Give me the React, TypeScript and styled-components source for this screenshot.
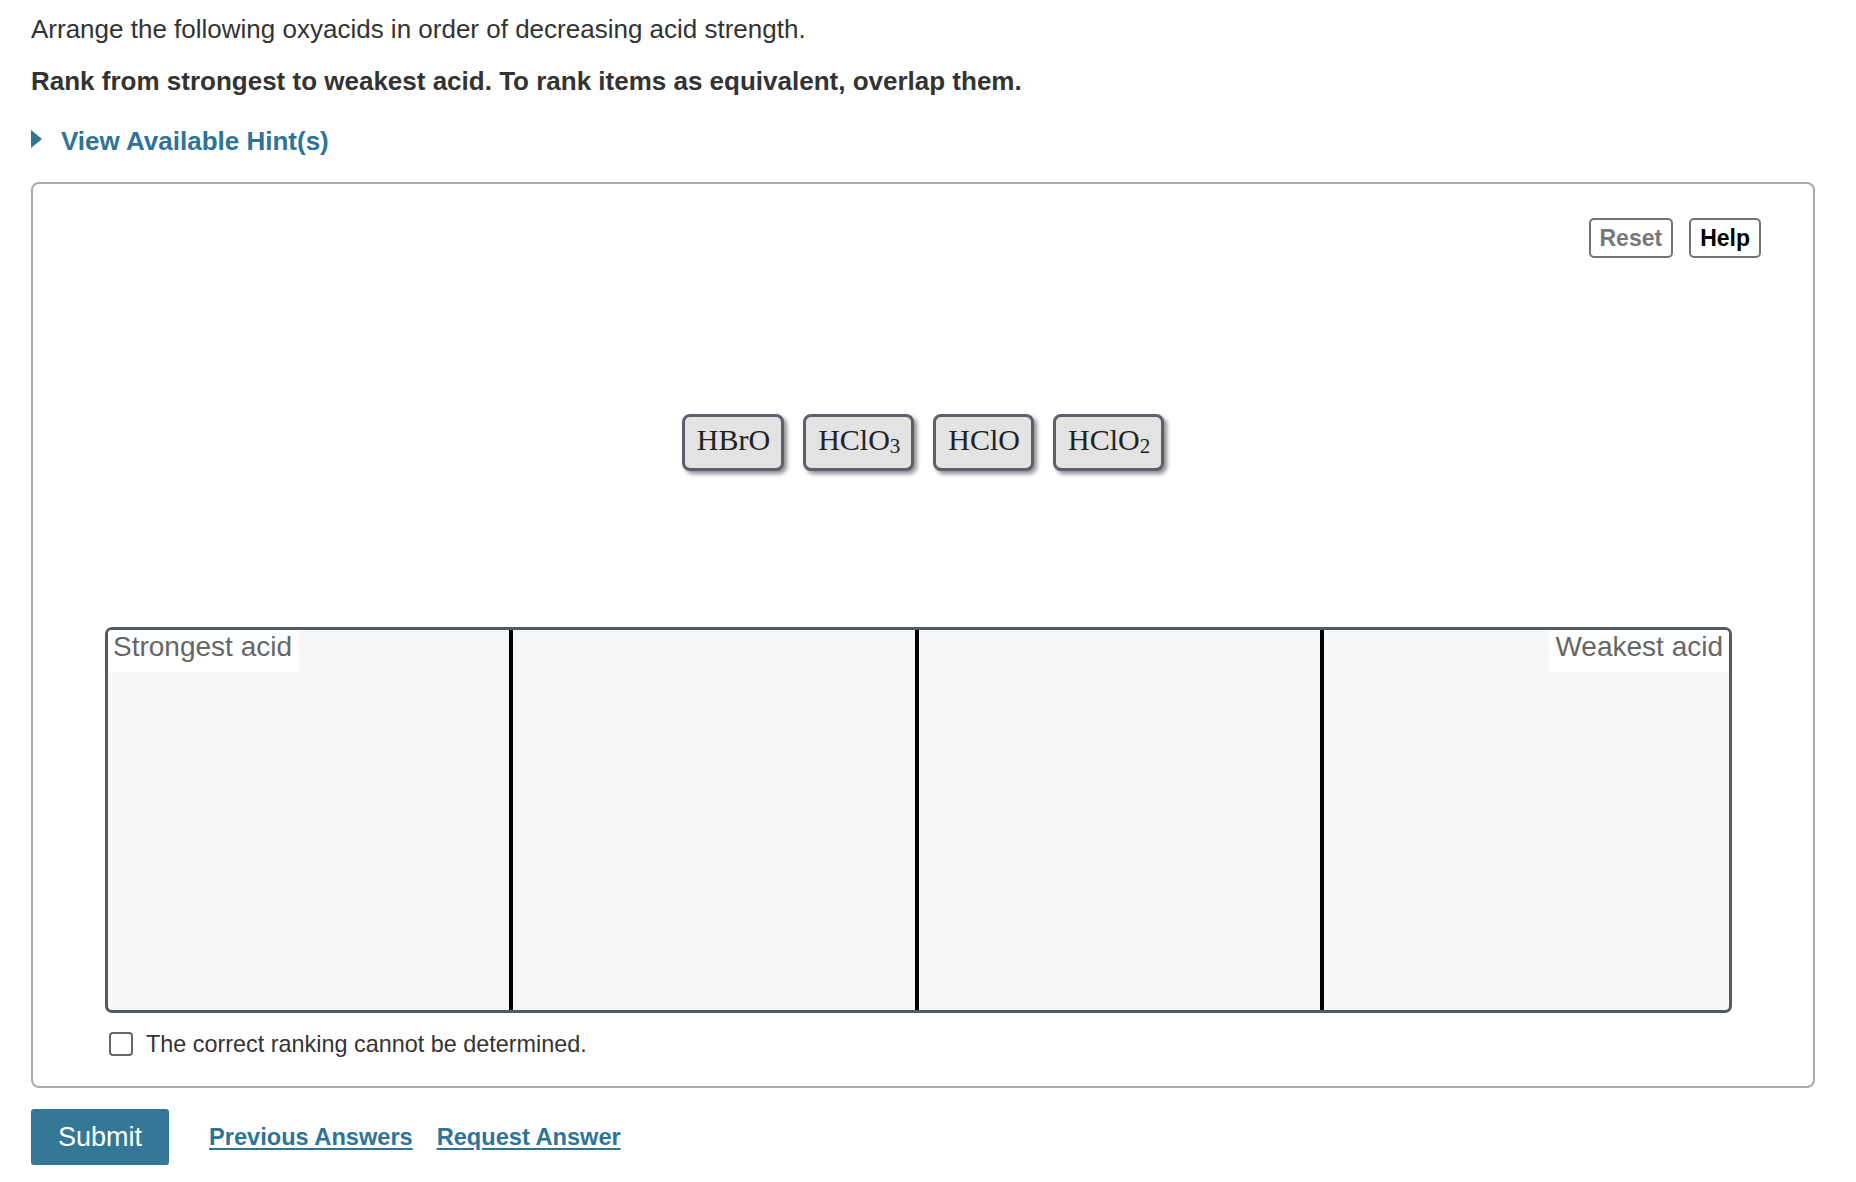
import React from 'react'
import styled, { createGlobalStyle } from 'styled-components'

const GlobalStyle = createGlobalStyle`
  body {
    margin: 0;
    background: #fff;
    font-family: 'Liberation Sans', Arial, Helvetica, sans-serif;
    color: #333;
  }
`

const chips = [
  { base: 'HBrO', sub: '' },
  { base: 'HClO', sub: '3' },
  { base: 'HClO', sub: '' },
  { base: 'HClO', sub: '2' },
]

const Page = styled.div`
  padding: 14px 0 0 31px;
  width: 1784px;
`

const Prompt = styled.p<{ bold?: boolean }>`
  margin: 0 0 22px;
  font-size: 26px;
  line-height: 30px;
  font-weight: ${({ bold }) => (bold ? 700 : 400)};
`

const HintToggle = styled.a`
  display: flex;
  align-items: center;
  gap: 19px;
  margin-top: 30px;
  height: 30px;
  font-size: 26px;
  font-weight: 700;
  color: #2f7497;
  text-decoration: none;
`

const Caret = styled.span`
  width: 0;
  height: 0;
  border-top: 9px solid transparent;
  border-bottom: 9px solid transparent;
  border-left: 11px solid #2f7497;
  margin-top: -4px;
`

const Panel = styled.div`
  margin-top: 26px;
  border: 2px solid #aaa;
  border-radius: 8px;
  padding: 34px 0 30px;
`

const Toolbar = styled.div`
  display: flex;
  justify-content: flex-end;
  gap: 16px;
  padding-right: 52px;
`

const ToolButton = styled.button<{ muted?: boolean }>`
  height: 40px;
  padding: 0 9px;
  border: 2px solid #6f7577;
  border-radius: 5px;
  background: #fff;
  font-family: 'Liberation Sans', Arial, sans-serif;
  font-size: 23px;
  font-weight: 700;
  color: ${({ muted }) => (muted ? '#777' : '#000')};
`

const Tray = styled.div`
  height: 369px;
  display: flex;
  align-items: center;
  justify-content: center;
  gap: 19px;
`

const Chip = styled.div`
  height: 57px;
  box-sizing: border-box;
  display: flex;
  align-items: center;
  padding: 0 11px 5px 12px;
  background: #e3e3e3;
  border: 3px solid #5f5f6c;
  border-radius: 8px;
  box-shadow: 3px 3px 4px rgba(0, 0, 0, 0.45);
  font-family: 'Liberation Serif', 'DejaVu Serif', serif;
  font-size: 30px;
  color: #222;

  sub {
    font-size: 21px;
    position: relative;
    top: 6px;
    vertical-align: baseline;
    line-height: 0;
  }
`

const Ranking = styled.div`
  margin: 0 81px 0 72px;
  height: 386px;
  box-sizing: border-box;
  display: grid;
  grid-template-columns: repeat(4, 1fr);
  border: 3px solid #555865;
  border-radius: 7px;
  background: #f7f7f7;
  overflow: hidden;
`

const Cell = styled.div<{ last?: boolean }>`
  display: flex;
  flex-direction: column;
  align-items: ${({ last }) => (last ? 'flex-end' : 'flex-start')};
  border-right: ${({ last }) => (last ? 'none' : '4px solid #000')};
`

const CellLabel = styled.span`
  background: #fff;
  color: #666;
  font-size: 28px;
  line-height: 34px;
  padding: 0 6px 8px 5px;
`

const CheckRow = styled.label`
  display: flex;
  align-items: center;
  gap: 13px;
  margin: 19px 0 0 76px;
  font-size: 23.4px;
  line-height: 24px;
  color: #333;
`

const Box = styled.span`
  width: 24px;
  height: 24px;
  box-sizing: border-box;
  border: 2px solid #666;
  border-radius: 4px;
  background: #fff;
`

const Footer = styled.div`
  display: flex;
  align-items: center;
  margin-top: 21px;
`

const SubmitButton = styled.button`
  width: 138px;
  height: 56px;
  border: none;
  border-radius: 3px;
  background: #357797;
  color: #fff;
  font-family: 'Liberation Sans', Arial, sans-serif;
  font-size: 27px;
  margin-right: 40px;
`

const FooterLink = styled.a`
  font-size: 23.6px;
  font-weight: 700;
  color: #2f7497;
  text-decoration: underline;
  text-underline-offset: 3px;
  margin-right: 24px;
`

export default function App() {
  return (
    <Page>
      <GlobalStyle />
      <Prompt>Arrange the following oxyacids in order of decreasing acid strength.</Prompt>
      <Prompt bold>Rank from strongest to weakest acid. To rank items as equivalent, overlap them.</Prompt>
      <HintToggle href="#">
        <Caret />
        View Available Hint(s)
      </HintToggle>
      <Panel>
        <Toolbar>
          <ToolButton muted>Reset</ToolButton>
          <ToolButton>Help</ToolButton>
        </Toolbar>
        <Tray>
          {chips.map((c, i) => (
            <Chip key={i}>
              {c.base}
              {c.sub && <sub>{c.sub}</sub>}
            </Chip>
          ))}
        </Tray>
        <Ranking>
          <Cell>
            <CellLabel>Strongest acid</CellLabel>
          </Cell>
          <Cell />
          <Cell />
          <Cell last>
            <CellLabel>Weakest acid</CellLabel>
          </Cell>
        </Ranking>
        <CheckRow>
          <Box />
          The correct ranking cannot be determined.
        </CheckRow>
      </Panel>
      <Footer>
        <SubmitButton>Submit</SubmitButton>
        <FooterLink href="#">Previous Answers</FooterLink>
        <FooterLink href="#">Request Answer</FooterLink>
      </Footer>
    </Page>
  )
}
